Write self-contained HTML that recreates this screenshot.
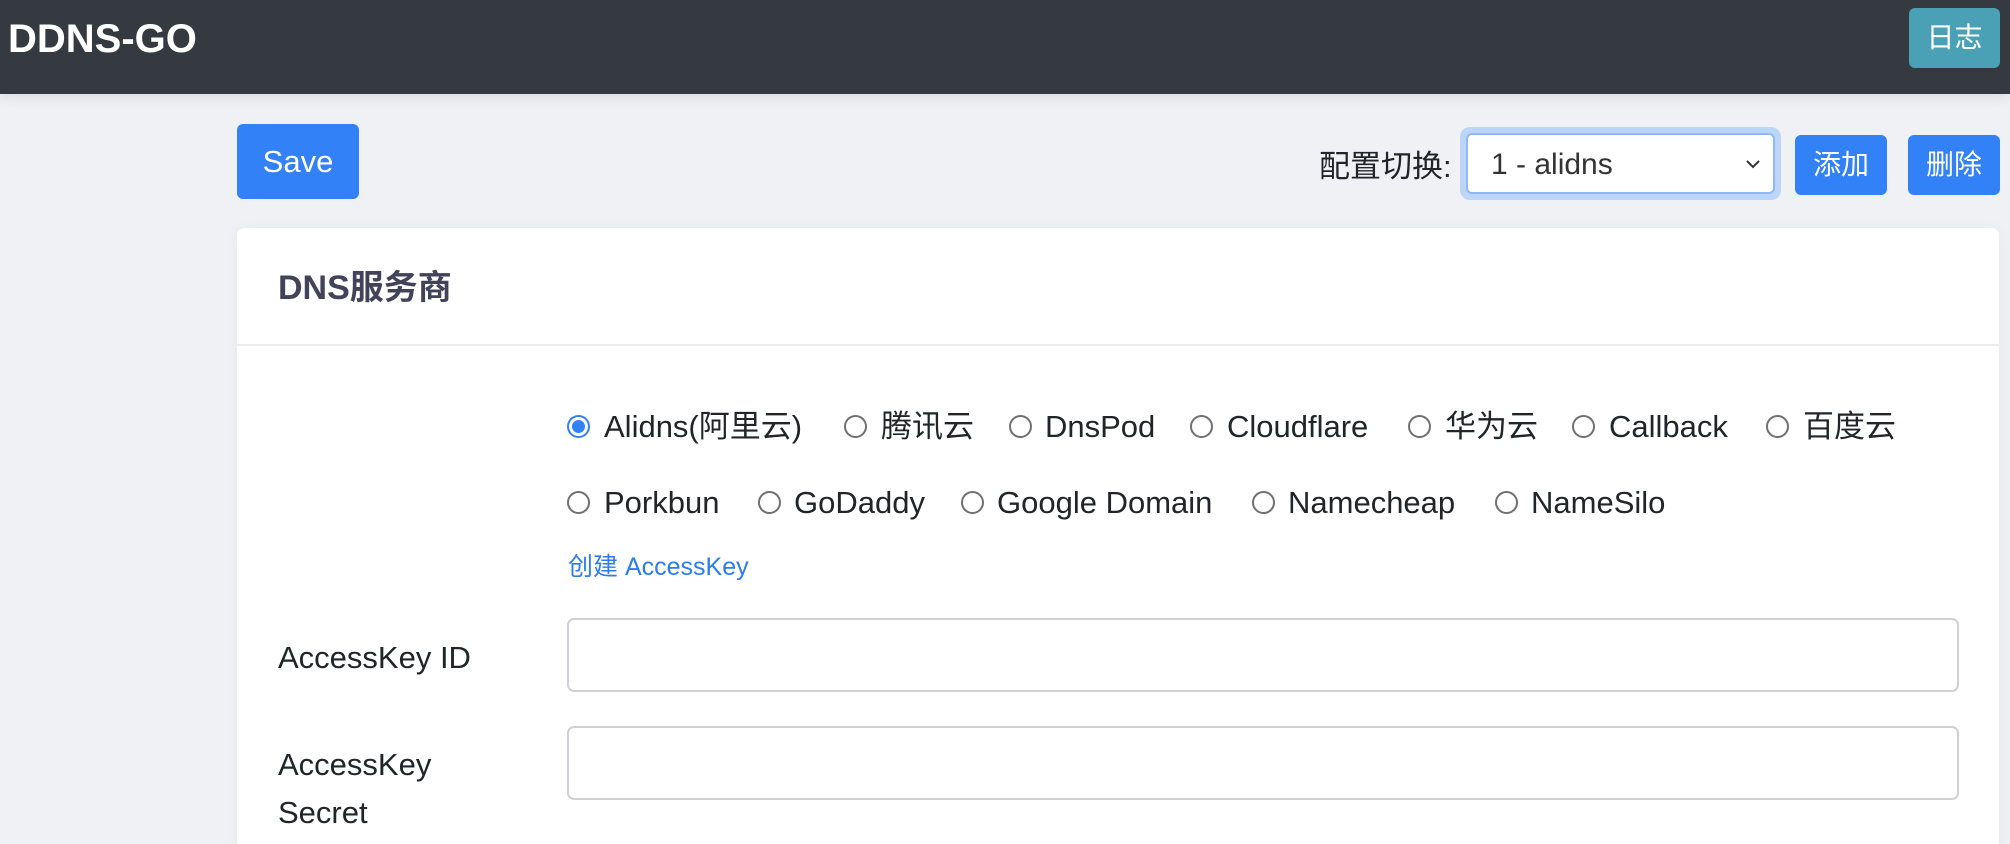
<!DOCTYPE html>
<html><head><meta charset="utf-8"><style>
*{box-sizing:border-box;margin:0;padding:0}
html,body{width:2010px;height:844px;overflow:hidden}
body{background:#f0f1f5;font-family:"Liberation Sans","Noto Sans CJK SC",sans-serif;color:#212529;position:relative}
.nav{position:absolute;left:0;top:0;width:2010px;height:94px;background:#343a40;box-shadow:0 4px 12px rgba(0,0,0,.08)}
.brand{position:absolute;left:8px;top:16px;font-size:40px;font-weight:bold;color:#fff;line-height:46px}
.log{position:absolute;left:1909px;top:8px;width:91px;height:60px;background:#4aa1b5;border-radius:6px;color:#fff;font-size:28px;line-height:60px;text-align:center}
.btn{position:absolute;background:#3381f6;color:#fff;border-radius:6px;text-align:center}
.abs{position:absolute;white-space:nowrap}
.card{position:absolute;left:237px;top:228px;width:1762px;height:640px;background:#fff;border-radius:7px;box-shadow:0 0 14px rgba(0,0,0,.04)}
.hdr{position:absolute;left:0;top:0;width:100%;height:118px;border-bottom:2px solid #ebebf0}
.r{position:absolute;width:23px;height:23px;border:2px solid #707070;border-radius:50%;background:#fff}
.r.on{border-color:#3381f6}
.r.on:after{content:"";position:absolute;left:3px;top:3px;width:13px;height:13px;border-radius:50%;background:#3381f6}
.t{position:absolute;font-size:31px;line-height:36px;white-space:nowrap}
.inp{position:absolute;left:567px;width:1392px;height:74px;border:2px solid #cfd1d6;border-radius:7px;background:#fff}
</style></head><body>
<div class="nav"><div class="brand">DDNS-GO</div><div class="log">日志</div></div>
<div class="btn" style="left:237px;top:124px;width:122px;height:75px;font-size:31px;line-height:75px">Save</div>
<div class="abs" style="left:1319px;top:148px;font-size:31px;line-height:38px">配置切换:</div>
<div class="abs" style="left:1460px;top:127px;width:321px;height:73px;border-radius:10px;background:#bcd6f9"></div>
<div class="abs" style="left:1466px;top:133px;width:309px;height:61px;border:2px solid #8fb8f7;border-radius:6px;background:#fff"></div>
<div class="abs" style="left:1491px;top:147px;font-size:30px;line-height:36px;color:#333">1 - alidns</div>
<svg class="abs" style="left:1745px;top:158px" width="16" height="12" viewBox="0 0 16 12"><path d="M2 3l6 6 6-6" fill="none" stroke="#333" stroke-width="2"/></svg>
<div class="btn" style="left:1795px;top:135px;width:92px;height:60px;font-size:28px;line-height:60px">添加</div>
<div class="btn" style="left:1908px;top:135px;width:92px;height:60px;font-size:28px;line-height:60px">删除</div>
<div class="card">
<div class="hdr"><div class="abs" style="left:41px;top:40px;font-size:34px;font-weight:bold;color:#42425a;line-height:40px">DNS服务商</div></div>
</div>
<div class="r on" style="left:567px;top:415px"></div><div class="t" style="left:604px;top:409px">Alidns(阿里云)</div>
<div class="r" style="left:844px;top:415px"></div><div class="t" style="left:881px;top:409px">腾讯云</div>
<div class="r" style="left:1009px;top:415px"></div><div class="t" style="left:1045px;top:409px">DnsPod</div>
<div class="r" style="left:1190px;top:415px"></div><div class="t" style="left:1227px;top:409px">Cloudflare</div>
<div class="r" style="left:1408px;top:415px"></div><div class="t" style="left:1445px;top:409px">华为云</div>
<div class="r" style="left:1572px;top:415px"></div><div class="t" style="left:1609px;top:409px">Callback</div>
<div class="r" style="left:1766px;top:415px"></div><div class="t" style="left:1803px;top:409px">百度云</div>
<div class="r" style="left:567px;top:491px"></div><div class="t" style="left:604px;top:485px">Porkbun</div>
<div class="r" style="left:758px;top:491px"></div><div class="t" style="left:794px;top:485px">GoDaddy</div>
<div class="r" style="left:961px;top:491px"></div><div class="t" style="left:997px;top:485px">Google Domain</div>
<div class="r" style="left:1252px;top:491px"></div><div class="t" style="left:1288px;top:485px">Namecheap</div>
<div class="r" style="left:1495px;top:491px"></div><div class="t" style="left:1531px;top:485px">NameSilo</div>
<div class="abs" style="left:568px;top:552px;font-size:25px;line-height:30px;color:#2a7cf0">创建 AccessKey</div>
<div class="t" style="left:278px;top:640px">AccessKey ID</div>
<div class="inp" style="top:618px"></div>
<div class="t" style="left:278px;top:747px">AccessKey</div>
<div class="t" style="left:278px;top:795px">Secret</div>
<div class="inp" style="top:726px"></div>
</body></html>
